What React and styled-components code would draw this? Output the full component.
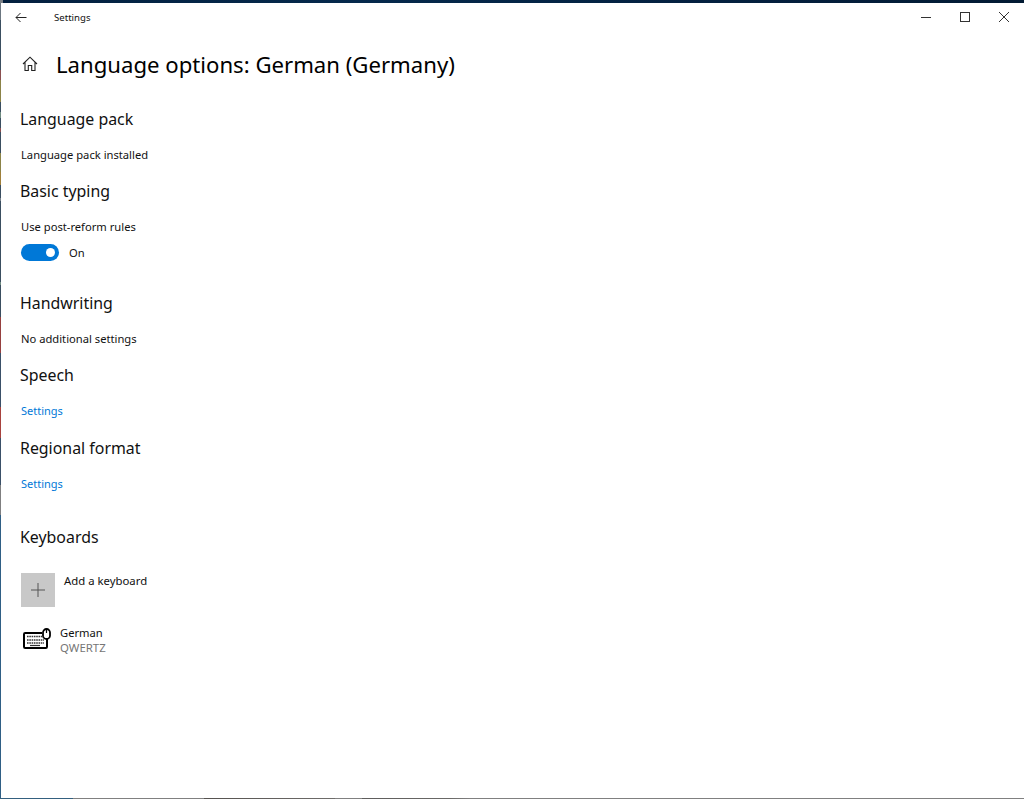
import React from 'react';
import styled, { createGlobalStyle } from 'styled-components';

const GlobalStyle = createGlobalStyle`
  html, body {
    margin: 0;
    padding: 0;
    background: #fff;
  }
`;

const Desktop = styled.div`
  width: 1024px;
  height: 799px;
  overflow: hidden;
  display: flex;
  flex-direction: column;
  font-family: "Noto Sans", "Open Sans", sans-serif;
  color: #000;
`;

const TopEdge = styled.div`
  height: 3px;
  flex: none;
  background: linear-gradient(to right, #7d8288 0, #7d8288 3px, #03203f 3px, #05294c 35%, #03203f 70%, #021a33 100%);
`;

const BottomEdge = styled.div`
  height: 1px;
  flex: none;
  background: linear-gradient(to right, #34607f 0, #34607f 73px, #808080 73px, #808080 204px, #55524f 204px, #6f6d6b 335px, #808080 335px, #808080 362px, #5e5d5c 362px, #6a6967 450px, #808080 470px, #808080 100%);
`;

const Middle = styled.div`
  flex: 1;
  min-height: 0;
  display: flex;
`;

/* wallpaper showing through at the window's left side */
const LeftEdge = styled.div`
  width: 1px;
  flex: none;
  background: linear-gradient(to bottom,
    #6b7680 0, #6b7680 17px, #3a4e60 17px, #3a4e60 67px,
    #8a4f50 67px, #8a4f50 77px, #8b8348 77px, #8b8348 99px,
    #3a4e60 99px, #3a4e60 109px, #6e8a80 109px, #6e8a80 115px,
    #3a4e60 115px, #3a4e60 125px, #8a4f50 125px, #8a4f50 129px,
    #3a4e60 129px, #3a4e60 150px, #8b8348 150px, #8b8348 169px,
    #a07f3a 169px, #a07f3a 182px, #3a4e60 182px, #3a4e60 195px,
    #76808a 195px, #76808a 198px, #3a4e60 198px, #3a4e60 279px,
    #6e8a80 279px, #6e8a80 282px, #3a4e60 282px, #3a4e60 314px,
    #96403f 314px, #96403f 350px, #3a5068 350px, #3a5068 404px,
    #a8423e 404px, #a8423e 435px, #3a5068 435px, #3a5068 482px,
    #7f7f80 482px, #7f7f80 512px, #2f5f85 512px, #2f5f85 100%);
`;

const Window = styled.div`
  flex: 1;
  min-width: 0;
  background: #fff;
`;

const TitleBar = styled.div`
  height: 28px;
  display: flex;
  align-items: center;
  padding-right: 1px;
`;

const BackButton = styled.div`
  width: 43px;
  padding-left: 14px;
  box-sizing: border-box;
  svg { display: block; }
`;

const TitleText = styled.div`
  font-size: 9.6px;
  line-height: 14px;
  margin: 2px 0 0 10px;
  flex: 1;
  color: #111;
`;

const WindowButton = styled.div`
  width: 39px;
  height: 28px;
  display: flex;
  align-items: center;
  justify-content: center;
  svg { display: block; }
`;

const Content = styled.div`
  padding-left: 19px;
`;

const PageHeader = styled.div`
  display: flex;
  align-items: center;
  height: 44px;
  margin-top: 11px;
  margin-bottom: 21px;
`;

const HomeIcon = styled.div`
  width: 36px;
  svg { display: block; margin-left: 2px; }
`;

const PageTitle = styled.h1`
  margin: 0;
  font-size: 22.15px;
  font-weight: 400;
  line-height: 30px;
  white-space: nowrap;
`;

const Section = styled.section`
  padding-top: ${props => props.gap || 0}px;
`;

const SectionTitle = styled.h2`
  margin: 0;
  font-size: 15.9px;
  font-weight: 400;
  line-height: 24px;
  color: #111;
`;

const BodyText = styled.div`
  font-size: 11.2px;
  line-height: 16px;
  margin: 16px 0 0 1px;
  color: #111;
`;

const SettingsLink = styled.a`
  display: block;
  font-size: 11px;
  line-height: 16px;
  margin: 16px 0 0 1px;
  color: #0078d7;
`;

const ToggleRow = styled.div`
  display: flex;
  align-items: center;
  margin: 9px 0 0 1px;
  font-size: 11.2px;
  line-height: 16px;
  color: #111;
`;

const ToggleTrack = styled.div`
  width: 38px;
  height: 17px;
  border-radius: 9px;
  background: #0078d7;
  display: flex;
  align-items: center;
  justify-content: flex-end;
  padding-right: 4px;
  box-sizing: border-box;
  margin-right: 10px;
`;

const ToggleKnob = styled.div`
  width: 9px;
  height: 9px;
  border-radius: 50%;
  background: #fff;
`;

const AddRow = styled.div`
  display: flex;
  align-items: flex-start;
  margin: 24px 0 0 1px;
`;

const AddTile = styled.div`
  width: 34px;
  height: 34px;
  background: #c8c8c8;
  display: flex;
  align-items: center;
  justify-content: center;
  margin-right: 9px;
`;

const AddLabel = styled.div`
  font-size: 11.35px;
  line-height: 16px;
  color: #111;
`;

const KeyboardRow = styled.div`
  display: flex;
  align-items: center;
  margin: 18px 0 0 3px;
`;

const KeyboardIcon = styled.div`
  width: 37px;
  margin-bottom: 4px;
  svg { display: block; }
`;

const KeyboardName = styled.div`
  font-size: 11.2px;
  line-height: 15px;
  color: #111;
`;

const KeyboardLayout = styled.div`
  font-size: 11.4px;
  line-height: 15px;
  color: #767676;
`;

const App = () => (
  <>
    <GlobalStyle />
    <Desktop>
      <TopEdge />
      <Middle>
        <LeftEdge />
        <Window>
          <TitleBar>
            <BackButton>
              <svg width="12" height="11" viewBox="0 0 12 11" fill="none" stroke="#222" strokeWidth="1">
                <path d="M11.5 5.5H1M5.5 1 1 5.5 5.5 10" />
              </svg>
            </BackButton>
            <TitleText>Settings</TitleText>
            <WindowButton>
              <svg width="10" height="10" viewBox="0 0 10 10" stroke="#333" strokeWidth="1">
                <path d="M0 5.5h10" />
              </svg>
            </WindowButton>
            <WindowButton>
              <svg width="10" height="10" viewBox="0 0 10 10" fill="none" stroke="#333" strokeWidth="1">
                <rect x="0.5" y="0.5" width="9" height="9" />
              </svg>
            </WindowButton>
            <WindowButton>
              <svg width="10" height="10" viewBox="0 0 10 10" stroke="#333" strokeWidth="1">
                <path d="M0 0 10 10M10 0 0 10" />
              </svg>
            </WindowButton>
          </TitleBar>
          <Content>
            <PageHeader>
              <HomeIcon>
                <svg width="16" height="16" viewBox="0 0 16 16" fill="none" stroke="#222" strokeWidth="1.1">
                  <path d="M1 8 8 1.2 15 8M3 6.2V14.5H6.3V9.5H9.7V14.5H13V6.2" />
                </svg>
              </HomeIcon>
              <PageTitle>Language options: German (Germany)</PageTitle>
            </PageHeader>
            <Section>
              <SectionTitle>Language pack</SectionTitle>
              <BodyText>Language pack installed</BodyText>
            </Section>
            <Section gap={16}>
              <SectionTitle>Basic typing</SectionTitle>
              <BodyText>Use post-reform rules</BodyText>
              <ToggleRow>
                <ToggleTrack><ToggleKnob /></ToggleTrack>
                On
              </ToggleRow>
            </Section>
            <Section gap={30}>
              <SectionTitle>Handwriting</SectionTitle>
              <BodyText>No additional settings</BodyText>
            </Section>
            <Section gap={16}>
              <SectionTitle>Speech</SectionTitle>
              <SettingsLink>Settings</SettingsLink>
            </Section>
            <Section gap={17}>
              <SectionTitle>Regional format</SectionTitle>
              <SettingsLink>Settings</SettingsLink>
            </Section>
            <Section gap={33}>
              <SectionTitle>Keyboards</SectionTitle>
              <AddRow>
                <AddTile>
                  <svg width="14" height="14" viewBox="0 0 14 14" stroke="#555" strokeWidth="1">
                    <path d="M7 0v14M0 7h14" />
                  </svg>
                </AddTile>
                <AddLabel>Add a keyboard</AddLabel>
              </AddRow>
              <KeyboardRow>
                <KeyboardIcon>
                  <svg width="28" height="21" viewBox="0 0 28 21" fill="none" stroke="#000">
                    <path d="M19 5H2.2C1.5 5 1 5.5 1 6.2V18.8C1 19.5 1.5 20 2.2 20H22.8C23.5 20 24 19.5 24 18.8V11" strokeWidth="2" />
                    <rect x="20" y="1" width="7" height="10" rx="3.5" strokeWidth="1.8" />
                    <path d="M23.5 1.5V5" strokeWidth="1.2" />
                    <path d="M4 8.5H20.5M4 12H21M4 15H21" stroke="#333" strokeWidth="1.6" strokeDasharray="1.6 0.7" />
                    <path d="M7 17.5H17" stroke="#333" strokeWidth="1.2" />
                  </svg>
                </KeyboardIcon>
                <div>
                  <KeyboardName>German</KeyboardName>
                  <KeyboardLayout>QWERTZ</KeyboardLayout>
                </div>
              </KeyboardRow>
            </Section>
          </Content>
        </Window>
      </Middle>
      <BottomEdge />
    </Desktop>
  </>
);

export default App;
